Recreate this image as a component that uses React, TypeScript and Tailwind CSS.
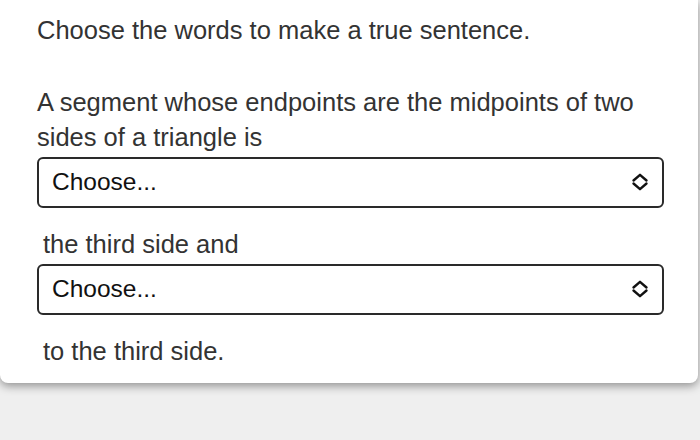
import React from "react";

function UpDownIcon() {
  return (
    <svg width="18" height="18" viewBox="0 0 18 18" fill="none" className="shrink-0">
      <path d="M2.5 7.5 9 1.8l6.5 5.7" stroke="#111" strokeWidth="2.4" strokeLinecap="round" strokeLinejoin="round" />
      <path d="M2.5 10.5 9 16.2l6.5-5.7" stroke="#111" strokeWidth="2.4" strokeLinecap="round" strokeLinejoin="round" />
    </svg>
  );
}

function ChooseBox() {
  return (
    <div className="flex h-[51px] w-[627px] items-center justify-between rounded-[6px] border-2 border-[#2a2a2a] bg-white pl-[13px] pr-[13px]">
      <span className="text-[24.5px] text-[#111]">Choose...</span>
      <UpDownIcon />
    </div>
  );
}

export default function App() {
  return (
    <div
      className="h-[440px] w-[700px] overflow-hidden bg-[#efefef]"
      style={{ fontFamily: '"Liberation Sans", Arial, sans-serif' }}
    >
      <div className="w-[698px] rounded-b-[8px] bg-white pb-[17px] pl-[37px] pt-[14px] text-[#333] shadow-[0_3px_10px_rgba(0,0,0,0.4)]">
        <p className="text-[25.5px] leading-[32px]">Choose the words to make a true sentence.</p>
        <p className="mt-[39px] text-[25.5px] leading-[35px]">
          A segment whose endpoints are the midpoints of two
          <br />
          sides of a triangle is
        </p>
        <div className="mt-[1.5px]">
          <ChooseBox />
        </div>
        <p className="ml-[6px] mt-[21px] text-[25.5px] leading-[30px]">the third side and</p>
        <div className="mt-[5px]">
          <ChooseBox />
        </div>
        <p className="ml-[6px] mt-[21px] text-[25.5px] leading-[30px]">to the third side.</p>
      </div>
    </div>
  );
}
